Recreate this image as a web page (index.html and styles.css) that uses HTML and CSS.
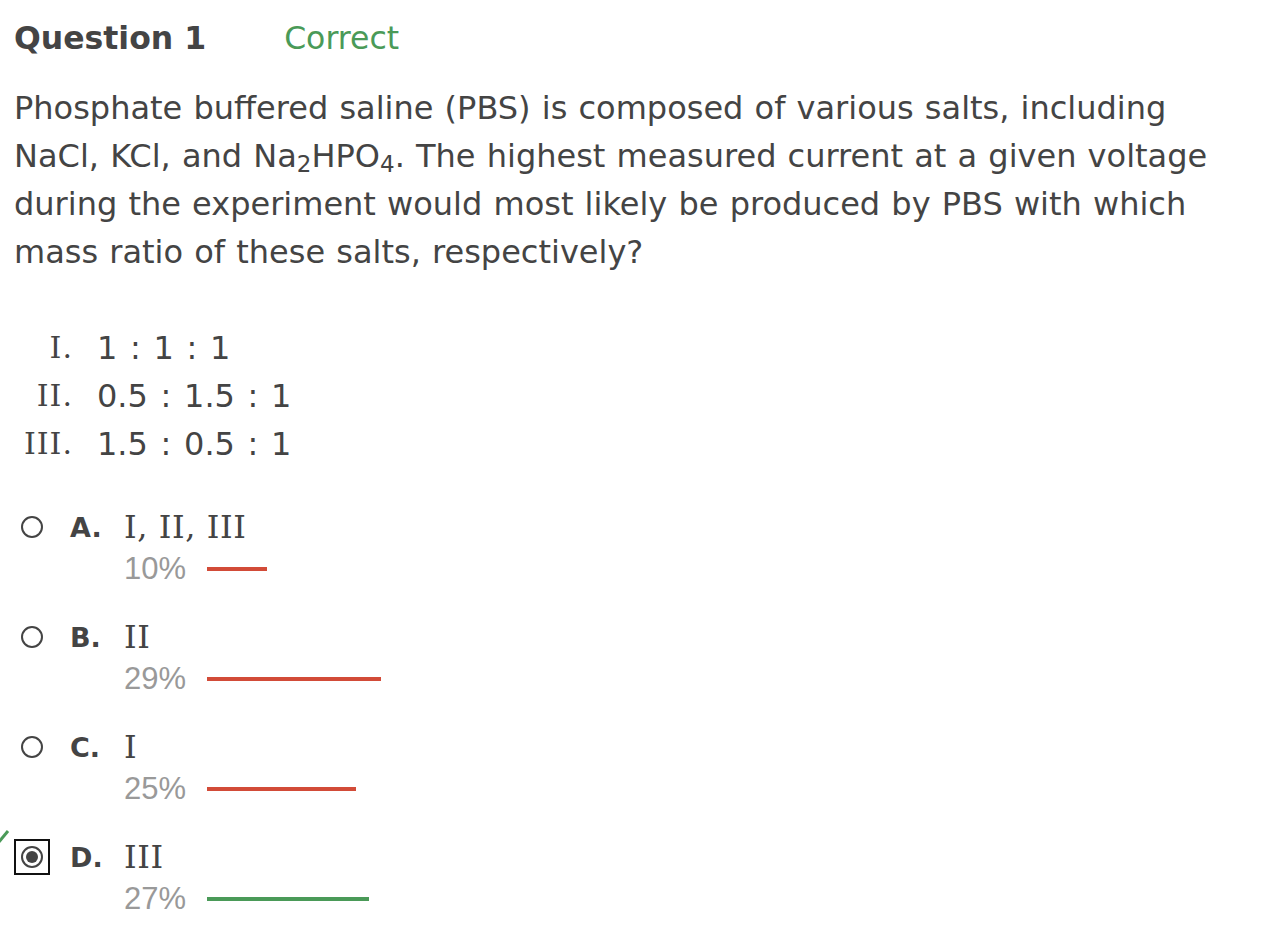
FILE: index.html
```html
<!DOCTYPE html>
<html>
<head>
<meta charset="utf-8">
<link rel="stylesheet" href="styles.css">
</head>
<body>
<div class="page">
  <div class="header">
    <span class="qtitle">Question 1</span>
    <span class="status">Correct</span>
  </div>
  <p class="stem">Phosphate buffered saline (PBS) is composed of various salts, including NaCl, KCl, and Na<sub>2</sub>HPO<sub>4</sub>. The highest measured current at a given voltage during the experiment would most likely be produced by PBS with which mass ratio of these salts, respectively?</p>

  <div class="ratios">
    <span class="num">I.</span><span class="val">1 : 1 : 1</span>
    <span class="num">II.</span><span class="val">0.5 : 1.5 : 1</span>
    <span class="num">III.</span><span class="val">1.5 : 0.5 : 1</span>
  </div>

  <div class="options">
    <div class="option">
      <span class="radio-wrap"><span class="radio"></span></span>
      <span class="letter">A.</span>
      <span class="text">I, II, III</span>
      <span class="pct">10%</span>
      <span class="bar-cell"><span class="bar wrong" style="width:60px"></span></span>
    </div>
    <div class="option">
      <span class="radio-wrap"><span class="radio"></span></span>
      <span class="letter">B.</span>
      <span class="text">II</span>
      <span class="pct">29%</span>
      <span class="bar-cell"><span class="bar wrong" style="width:174px"></span></span>
    </div>
    <div class="option">
      <span class="radio-wrap"><span class="radio"></span></span>
      <span class="letter">C.</span>
      <span class="text">I</span>
      <span class="pct">25%</span>
      <span class="bar-cell"><span class="bar wrong" style="width:149px"></span></span>
    </div>
    <div class="option selected">
      <svg class="check" width="12" height="16" viewBox="0 0 12 16"><line x1="-2" y1="15" x2="8" y2="3" stroke="#4a9a58" stroke-width="3"/></svg>
      <span class="radio-wrap"><span class="radio checked"></span></span>
      <span class="letter">D.</span>
      <span class="text">III</span>
      <span class="pct">27%</span>
      <span class="bar-cell"><span class="bar right" style="width:162px"></span></span>
    </div>
  </div>
</div>
</body>
</html>
```

FILE: styles.css
```css
html, body {
  margin: 0;
  padding: 0;
  background: #ffffff;
}

.page {
  padding: 20px 0 0 14px;
  color: #444444;
  font-family: "DejaVu Sans", Verdana, sans-serif;
}

.header {
  display: flex;
  align-items: baseline;
  gap: 78px;
  height: 42px;
}

.qtitle {
  font-weight: bold;
  font-size: 31.5px;
}

.status {
  color: #4a9a58;
  font-size: 31.5px;
}

.stem {
  margin: 22px 0 0 0;
  font-size: 32px;
  line-height: 48px;
  word-spacing: 1px;
  width: 1230px;
}

.stem sub {
  font-size: 23px;
  vertical-align: -5px;
  line-height: 0;
}

.ratios {
  margin-top: 48px;
  display: grid;
  grid-template-columns: 58px auto;
  column-gap: 25px;
  justify-content: start;
  font-size: 32px;
  line-height: 48px;
}

.ratios .num {
  text-align: right;
  font-family: "DejaVu Serif", "Liberation Serif", serif;
  font-size: 30px;
  letter-spacing: 1px;
  margin-right: -1px;
}

.ratios .val {
  word-spacing: 2.5px;
}

.options {
  margin-top: 38px;
  display: flex;
  flex-direction: column;
  gap: 26px;
}

.option {
  position: relative;
  display: grid;
  grid-template-columns: 36px 74px 62px auto;
  grid-template-rows: 42px 42px;
  align-items: center;
}

.radio-wrap {
  grid-row: 1;
  grid-column: 1;
  width: 36px;
  height: 36px;
  box-sizing: border-box;
  display: flex;
  align-items: center;
  justify-content: center;
}

.radio {
  width: 22px;
  height: 22px;
  box-sizing: border-box;
  border: 2px solid #444444;
  border-radius: 50%;
  display: flex;
  align-items: center;
  justify-content: center;
}

.radio.checked::after {
  content: "";
  width: 12px;
  height: 12px;
  border-radius: 50%;
  background: #444444;
}

.selected .radio-wrap {
  border: 2px solid #111111;
}

.letter {
  grid-row: 1;
  grid-column: 2;
  padding-left: 20px;
  font-weight: bold;
  font-size: 27px;
}

.text {
  grid-row: 1;
  grid-column: 3 / span 2;
  font-family: "DejaVu Serif", "Liberation Serif", serif;
  font-size: 32px;
  letter-spacing: 0.6px;
}

.pct {
  grid-row: 2;
  grid-column: 3;
  text-align: right;
  font-family: "Liberation Sans", Arial, sans-serif;
  font-size: 31px;
  color: #999999;
  white-space: nowrap;
}

.bar-cell {
  grid-row: 2;
  grid-column: 4;
  padding-left: 21px;
  display: flex;
  align-items: center;
}

.bar {
  display: block;
  height: 4px;
}

.bar.wrong {
  background: #d24b38;
}

.bar.right {
  background: #4a9a58;
}

.check {
  position: absolute;
  left: -14px;
  top: -8px;
}
```
